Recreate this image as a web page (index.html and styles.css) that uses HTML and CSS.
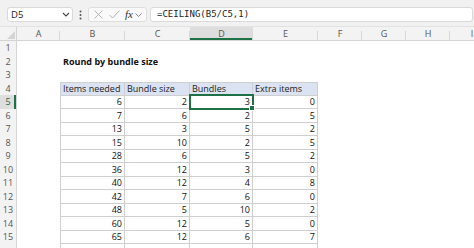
FILE: index.html
```html
<!DOCTYPE html>
<html>
<head>
<meta charset="utf-8">
<link rel="stylesheet" href="styles.css">
</head>
<body>
<div class="toolbar">
  <div class="namebox"><span class="nb-text">D5</span>
    <svg class="chev" width="8" height="5" viewBox="0 0 8 5"><path d="M1 1l3 3 3-3" stroke="#444" stroke-width="1.1" fill="none"/></svg>
  </div>
  <div class="dots"><svg width="3" height="10" viewBox="0 0 3 10"><circle cx="1.5" cy="1.5" r="1" fill="#555"/><circle cx="1.5" cy="5" r="1" fill="#555"/><circle cx="1.5" cy="8.5" r="1" fill="#555"/></svg></div>
  <div class="fnbox">
    <svg width="9" height="9" viewBox="0 0 9 9"><path d="M0.5 0.5l8 8M8.5 0.5l-8 8" stroke="#b4b4b4" stroke-width="1"/></svg>
    <svg width="11" height="9" viewBox="0 0 11 9"><path d="M0.5 5l3 3 7-7.5" stroke="#b4b4b4" stroke-width="1" fill="none"/></svg>
    <span class="fx">fx</span>
    <svg width="7" height="4" viewBox="0 0 7 4"><path d="M0.5 0.5l3 3 3-3" stroke="#888" stroke-width="1" fill="none"/></svg>
  </div>
  <div class="formula">=CEILING(B5/C5,1)</div>
</div>

<div class="sheet">
  <div class="row hdr">
    <div class="corner"><svg width="8" height="8" viewBox="0 0 8 8"><path d="M8 0V8H0Z" fill="#d4d4d4"/></svg></div>
    <div class="ch">A</div><div class="ch">B</div><div class="ch">C</div><div class="ch sel">D</div><div class="ch">E</div><div class="ch">F</div><div class="ch">G</div><div class="ch">H</div><div class="ch last">I</div>
  </div>
  <div class="row"><div class="rh">1</div></div>
  <div class="row"><div class="rh">2</div><div></div><div class="title">Round by bundle size</div></div>
  <div class="row"><div class="rh">3</div></div>
  <div class="row"><div class="rh">4</div><div></div>
    <div class="t th first top">Items needed</div><div class="t th top">Bundle size</div><div class="t th top">Bundles</div><div class="t th top">Extra items</div></div>
  <div class="row"><div class="rh rsel">5</div><div></div>
    <div class="t first">6</div><div class="t">2</div><div class="t active">3</div><div class="t">0</div></div>
  <div class="row"><div class="rh">6</div><div></div>
    <div class="t first">7</div><div class="t">6</div><div class="t">2</div><div class="t">5</div></div>
  <div class="row"><div class="rh">7</div><div></div>
    <div class="t first">13</div><div class="t">3</div><div class="t">5</div><div class="t">2</div></div>
  <div class="row"><div class="rh">8</div><div></div>
    <div class="t first">15</div><div class="t">10</div><div class="t">2</div><div class="t">5</div></div>
  <div class="row"><div class="rh">9</div><div></div>
    <div class="t first">28</div><div class="t">6</div><div class="t">5</div><div class="t">2</div></div>
  <div class="row"><div class="rh">10</div><div></div>
    <div class="t first">36</div><div class="t">12</div><div class="t">3</div><div class="t">0</div></div>
  <div class="row"><div class="rh">11</div><div></div>
    <div class="t first">40</div><div class="t">12</div><div class="t">4</div><div class="t">8</div></div>
  <div class="row"><div class="rh">12</div><div></div>
    <div class="t first">42</div><div class="t">7</div><div class="t">6</div><div class="t">0</div></div>
  <div class="row"><div class="rh">13</div><div></div>
    <div class="t first">48</div><div class="t">5</div><div class="t">10</div><div class="t">2</div></div>
  <div class="row"><div class="rh">14</div><div></div>
    <div class="t first">60</div><div class="t">12</div><div class="t">5</div><div class="t">0</div></div>
  <div class="row"><div class="rh">15</div><div></div>
    <div class="t first">65</div><div class="t">12</div><div class="t">6</div><div class="t">7</div></div>
  <div class="row"><div class="rh"></div><div></div>
    <div class="t first"></div><div class="t"></div><div class="t"></div><div class="t"></div></div>
</div>
</body>
</html>
```

FILE: styles.css
```css
html, body {
  margin: 0;
  padding: 0;
  width: 474px;
  height: 248px;
  overflow: hidden;
  background: #ffffff;
  font-family: "Open Sans", "Liberation Sans", sans-serif;
}

.toolbar {
  height: 27px;
  box-sizing: border-box;
  padding: 7px 1px 0 7px;
  background: #f1f1f1;
  display: flex;
  align-items: flex-start;
  border-bottom: 1px solid #e2e2e2;
}

.namebox {
  width: 66px;
  height: 15px;
  box-sizing: border-box;
  background: #fff;
  border: 1px solid #d9d9d9;
  border-radius: 3px;
  display: flex;
  align-items: center;
  justify-content: space-between;
  padding: 0 2px 0 3px;
}

.nb-text {
  font-size: 9.5px;
  color: #222;
}

.dots {
  width: 15px;
  height: 15px;
  display: flex;
  align-items: center;
  justify-content: center;
}

.fnbox {
  width: 59px;
  height: 15px;
  box-sizing: border-box;
  background: #fafafa;
  border: 1px solid #dedede;
  border-radius: 3px;
  display: flex;
  align-items: center;
  padding: 0 3px 0 5px;
  gap: 6px;
}

.fx {
  font-family: "Liberation Serif", serif;
  font-style: italic;
  font-size: 11px;
  color: #333;
  line-height: 13px;
  margin-left: -1px;
  margin-right: -4px;
}

.formula {
  flex: 1;
  margin-left: 3px;
  height: 15px;
  box-sizing: border-box;
  background: #fff;
  border: 1px solid #d9d9d9;
  border-radius: 3px;
  padding-left: 6px;
  font-family: "DejaVu Sans Mono", "Liberation Mono", monospace;
  font-size: 9px;
  line-height: 13px;
  color: #222;
}

.sheet {
  display: flex;
  flex-direction: column;
}

.row {
  display: grid;
  grid-template-columns: 17px 43px 65px 65px 63px 65px 44px 44px 44px 44px;
  height: 13.5px;
  font-size: 9px;
  line-height: 13px;
  color: #111;
}

.row.hdr {
  height: 13px;
  background: #f3f3f3;
  border-bottom: 1px solid #d4d4d4;
  box-sizing: content-box;
}

.corner {
  display: flex;
  align-items: flex-end;
  justify-content: flex-end;
  padding: 0 1px 1px 0;
  border-right: 1px solid #d4d4d4;
}

.ch {
  text-align: center;
  color: #555;
  font-size: 9px;
  line-height: 13px;
  position: relative;
}

.ch::after {
  content: "";
  position: absolute;
  right: 0;
  top: 4px;
  height: 9px;
  width: 1px;
  background: #d8d8d8;
}

.ch.sel {
  background: #dedede;
  box-shadow: inset 0 -2px 0 #1e7145;
}

.rh {
  background: #f3f3f3;
  border-right: 1px solid #d4d4d4;
  color: #555;
  text-align: center;
  font-size: 9px;
  line-height: 13.5px;
}

.rh.rsel {
  background: #dedede;
  color: #1e6b3f;
  box-shadow: inset -2px 0 0 #1e7145;
}

.title {
  font-weight: bold;
  white-space: nowrap;
  padding-left: 3px;
  color: #111;
  line-height: 14px;
}

.t {
  box-sizing: border-box;
  border-right: 1px solid #cfcfcf;
  border-bottom: 1px solid #cfcfcf;
  text-align: right;
  padding-right: 2px;
  line-height: 13px;
  white-space: nowrap;
}

.t.first {
  border-left: 1px solid #cfcfcf;
}

.t.top {
  border-top: 1px solid #cfcfcf;
  line-height: 12px;
}

.t.th {
  background: #dbe2f1;
  text-align: left;
  padding-left: 2px;
  color: #222;
}

.t.active {
  position: relative;
  outline: 2px solid #1e7145;
  outline-offset: -1px;
}

.t.active::after {
  content: "";
  position: absolute;
  right: -3px;
  bottom: -3px;
  width: 4px;
  height: 4px;
  background: #1e7145;
  border: 1px solid #fff;
}
```
